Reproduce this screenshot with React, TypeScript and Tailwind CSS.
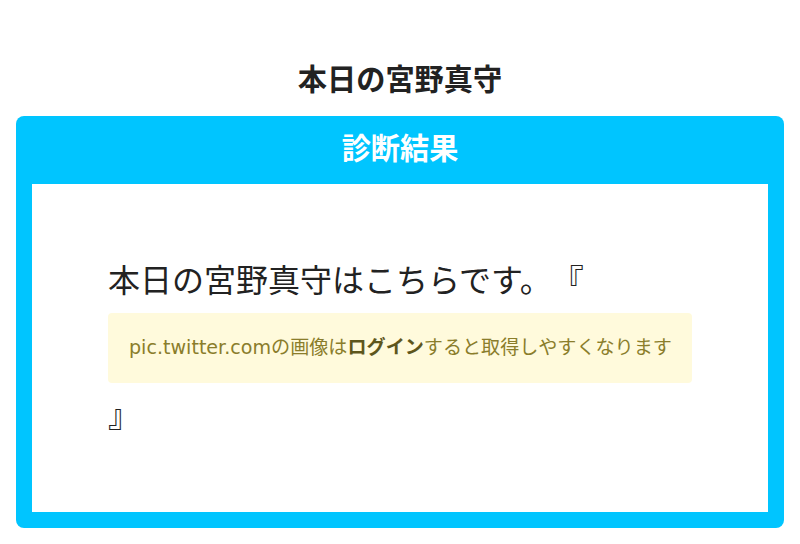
export default function App() {
  const font = { fontFamily: '"DejaVu Sans", "Noto Sans CJK JP", sans-serif' };
  return (
    <div className="w-[800px] h-[544px] bg-white text-[#222222] [text-spacing-trim:space-all]" style={font}>
      <div className="pt-[58px] h-[116px]">
        <h1 className="text-center font-bold text-[29.2px] leading-[44px] text-[#222222]">本日の宮野真守</h1>
      </div>
      <div className="mx-4 rounded-lg bg-[#00c5ff] px-4 pb-4">
        <div className="h-[68px] flex items-center justify-center text-white font-bold text-[29.2px]">診断結果</div>
        <div className="bg-white h-[328px] px-[76px] pt-[73px]">
          <p className="text-[32px] leading-[48px]">本日の宮野真守はこちらです。『</p>
          <div className="mt-2 h-[70px] rounded bg-[#fffadc] flex items-center pl-[21px] pr-[16px] text-[19.1px] text-[#8a7d2b] whitespace-nowrap">
            <span>
              pic.twitter.comの画像は<b className="font-bold text-[#5e561c]">ログイン</b>すると取得しやすくなります
            </span>
          </div>
          <p className="mt-[9px] text-[32px] leading-[48px]">』</p>
        </div>
      </div>
    </div>
  );
}
